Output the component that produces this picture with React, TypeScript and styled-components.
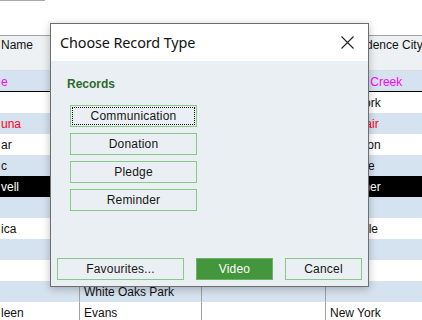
import styled, { createGlobalStyle } from "styled-components";

const GlobalStyle = createGlobalStyle`
  html, body {
    margin: 0;
    padding: 0;
    background: #ffffff;
    overflow: hidden;
  }
  body {
    font-family: "Liberation Sans", Arial, sans-serif;
    font-size: 12px;
  }
`;

const Page = styled.div`
  position: relative;
  width: 422px;
  height: 320px;
  overflow: hidden;
  background: #ffffff;
`;

const TopStrip = styled.div`
  width: 45px;
  height: 1px;
  background: #a9a9a9;
`;

const Grid = styled.div`
  margin-top: 34px;
  display: grid;
  grid-template-columns: 80px 122px 124px 140px;
  width: 466px;
`;

const HeadCell = styled.div<{ $indent?: number }>`
  height: 36px;
  box-sizing: border-box;
  border-top: 1px solid #a3a3a3;
  border-bottom: 1px solid #dadde0;
  background: #eef1f4;
  color: #111;
  padding: 2px 0 0 ${(p) => p.$indent ?? 1}px;
  line-height: 14px;
  white-space: nowrap;
  overflow: hidden;
`;

type Tone = "plain" | "magenta" | "red" | "cyan";

const toneColor: Record<Tone, string> = {
  plain: "#111111",
  magenta: "#ff00ff",
  red: "#ff0022",
  cyan: "#33c0f0",
};

const Cell = styled.div<{ $stripe: boolean; $sel: boolean; $tone: Tone; $line: boolean; $pad: number }>`
  height: 21px;
  box-sizing: border-box;
  padding-top: 1px;
  line-height: 20px;
  padding-left: ${(p) => p.$pad}px;
  white-space: nowrap;
  overflow: hidden;
  background: ${(p) => (p.$sel ? "#000000" : p.$stripe ? "#d5e2ef" : "#ffffff")};
  color: ${(p) => (p.$sel ? "#ffffff" : toneColor[p.$tone])};
  border-right: 1px solid #a0a0a0;
  border-bottom: 1px solid ${(p) => (p.$line ? "#000000" : "transparent")};
`;

const Dialog = styled.div`
  position: absolute;
  left: 50px;
  top: 23px;
  width: 319px;
  height: 264px;
  box-sizing: border-box;
  border: 1px solid #6e6e6e;
  background: #eaeff3;
  box-shadow: 0 2px 8px rgba(0, 0, 0, 0.25);
  display: flex;
  flex-direction: column;
`;

const TitleBar = styled.div`
  height: 37px;
  flex-shrink: 0;
  background: #ffffff;
  display: flex;
  align-items: center;
  justify-content: space-between;
  padding: 0 14px 0 9px;
`;

const Title = styled.span`
  font-family: "Noto Sans", "Open Sans", sans-serif;
  font-size: 14.4px;
  color: #111;
  letter-spacing: -0.1px;
`;

const CloseIcon = styled.svg`
  width: 13px;
  height: 13px;
  display: block;
`;

const Body = styled.div`
  flex: 1;
  display: flex;
  flex-direction: column;
  padding: 16px 6px 6px 6px;
`;

const Section = styled.div`
  margin-left: 10px;
  font-weight: bold;
  color: #2e6b2c;
  line-height: 14px;
`;

const RecordList = styled.div`
  margin: 14px 0 0 13px;
  display: flex;
  flex-direction: column;
  gap: 6px;
`;

const Button = styled.button<{ $w: number; $primary?: boolean; $focus?: boolean }>`
  width: ${(p) => p.$w}px;
  height: 22px;
  box-sizing: border-box;
  border: 1px solid ${(p) => (p.$primary ? "#6db06a" : "#88c98a")};
  background: ${(p) => (p.$primary ? "#43963b" : "#eaeff3")};
  color: ${(p) => (p.$primary ? "#ffffff" : "#161616")};
  font-family: "Liberation Sans", Arial, sans-serif;
  font-size: 12px;
  letter-spacing: 0.2px;
  padding: 0;
  margin: 0;
  outline: ${(p) => (p.$focus ? "1px dotted #000" : "none")};
  outline-offset: -3px;
`;

const Spacer = styled.div`
  flex: 1;
`;

const Footer = styled.div`
  display: flex;
  gap: 12px;
`;

type Row = { a: string; b: string; d: string; tone?: Tone; sel?: boolean; line?: boolean };

const rows: Row[] = [
  { a: "e", b: "", d: "Walnut Creek", tone: "magenta", line: true },
  { a: "", b: "", d: "New York" },
  { a: "una", b: "", d: "Montclair", tone: "red" },
  { a: "ar", b: "", d: "Princeton" },
  { a: "c", b: "", d: "Oakdale" },
  { a: "vell", b: "", d: "Kitchener", sel: true },
  { a: "", b: "", d: "" },
  { a: "ica", b: "", d: "Glendale" },
  { a: "", b: "", d: "", tone: "cyan" },
  { a: "", b: "", d: "" },
  { a: "", b: "White Oaks Park", d: "" },
  { a: "leen", b: "Evans", d: "New York" },
];

export default function App() {
  return (
    <Page>
      <GlobalStyle />
      <TopStrip />
      <Grid>
        <HeadCell>Name</HeadCell>
        <HeadCell />
        <HeadCell />
        <HeadCell $indent={16}>Residence City</HeadCell>
        {rows.map((r, i) => {
          const stripe = i % 2 === 0;
          const common = {
            $stripe: stripe,
            $sel: !!r.sel,
            $tone: r.tone ?? ("plain" as Tone),
            $line: !!r.line,
          };
          return [
            <Cell key={`a${i}`} {...common} $pad={1}>{r.a}</Cell>,
            <Cell key={`b${i}`} {...common} $pad={4}>{r.b}</Cell>,
            <Cell key={`c${i}`} {...common} $pad={4} />,
            <Cell key={`d${i}`} {...common} $pad={4}>{r.d}</Cell>,
          ];
        })}
      </Grid>

      <Dialog>
        <TitleBar>
          <Title>Choose Record Type</Title>
          <CloseIcon viewBox="0 0 13 13">
            <path d="M0.5 0.5 L12.5 12.5 M12.5 0.5 L0.5 12.5" stroke="#222" strokeWidth="1.1" fill="none" />
          </CloseIcon>
        </TitleBar>
        <Body>
          <Section>Records</Section>
          <RecordList>
            <Button $w={127} $focus>Communication</Button>
            <Button $w={127}>Donation</Button>
            <Button $w={127}>Pledge</Button>
            <Button $w={127}>Reminder</Button>
          </RecordList>
          <Spacer />
          <Footer>
            <Button $w={127}>Favourites...</Button>
            <Button $w={77} $primary>Video</Button>
            <Button $w={77}>Cancel</Button>
          </Footer>
        </Body>
      </Dialog>
    </Page>
  );
}
